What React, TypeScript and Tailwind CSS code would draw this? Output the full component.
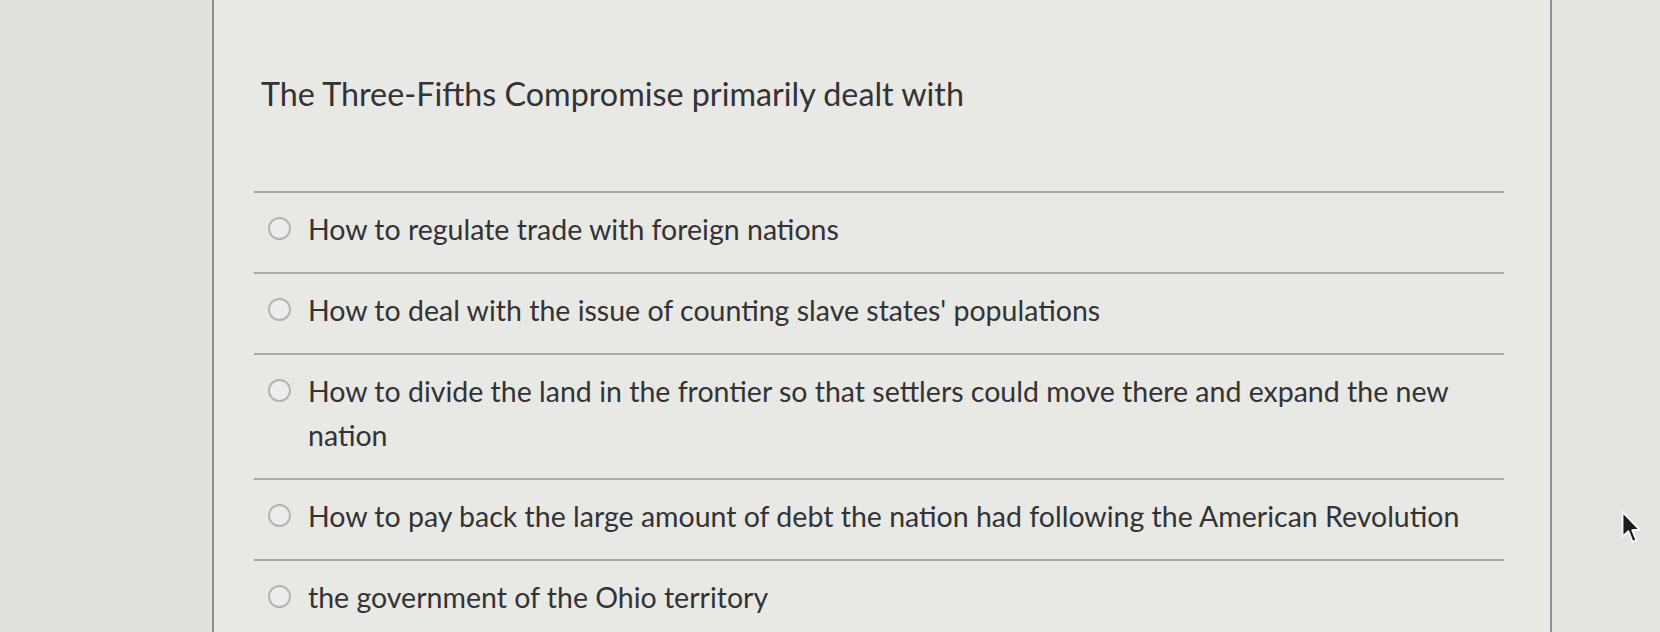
import React from 'react';

const options = [
  'How to regulate trade with foreign nations',
  "How to deal with the issue of counting slave states' populations",
  'How to divide the land in the frontier so that settlers could move there and expand the new nation',
  'How to pay back the large amount of debt the nation had following the American Revolution',
  'the government of the Ohio territory',
];

function Cursor() {
  return (
    <svg width="24" height="36" viewBox="0 0 22 34" className="absolute left-[1618px] top-[509px]">
      <path
        d="M4 3 L4 26 L9.5 21 L13.5 31 L17 29.5 L13 20 L20 19.5 Z"
        fill="#1c1c1e"
        stroke="#ffffff"
        strokeWidth="1.6"
        strokeLinejoin="round"
      />
    </svg>
  );
}

export default function App() {
  return (
    <div className="relative flex h-[632px] w-[1660px] overflow-hidden bg-[#e2e2df] font-['Lato','Open_Sans',sans-serif] text-[#333335]">
      <div className="w-[214px] shrink-0 border-r-2 border-[#8e8e96] bg-[#e0e0dd]" />

      <main className="flex-1 bg-[#e8e8e5] pl-[40px] pr-[46px]">
        <h1 className="pl-[7px] pt-[73px] text-[32.3px] leading-[42px] font-normal">
          The Three-Fifths Compromise primarily dealt with
        </h1>

        <div className="mt-[76px]">
          {options.map(text => (
            <label
              key={text}
              className="flex items-start gap-[17px] border-t-2 border-[#aaaaa8] pl-[14px] pt-[14px] pb-[21px]"
            >
              <span className="mt-[10px] h-[23px] w-[23px] shrink-0 rounded-full border-2 border-[#b4b4b2] bg-[#ededeb]" />
              <span className="text-[28.5px] leading-[44px]">{text}</span>
            </label>
          ))}
        </div>
      </main>

      <div className="w-[110px] shrink-0 border-l-2 border-[#8e8e96] bg-[#e3e3e0]" />

      <Cursor />
    </div>
  );
}
